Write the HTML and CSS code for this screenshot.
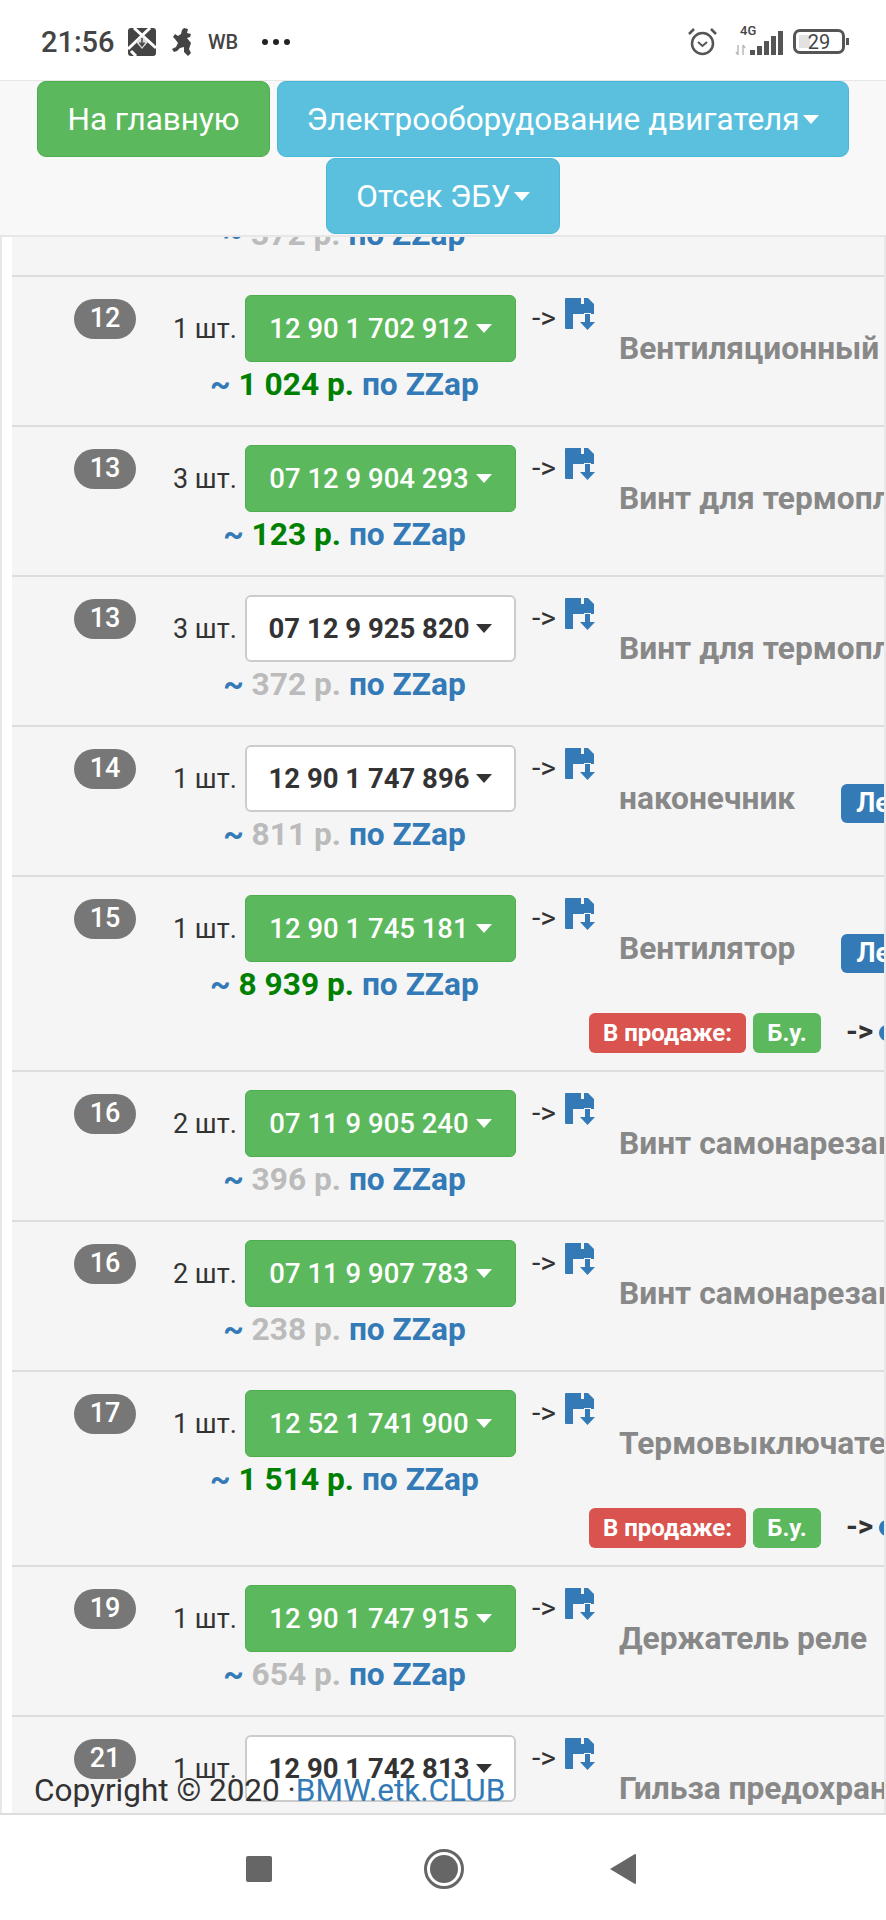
FILE: index.html
```html
<!DOCTYPE html>
<html lang="ru">
<head>
    <meta charset="UTF-8">
    <meta name="viewport" content="width=device-width, initial-scale=1.0">
    <title>Отсек ЭБУ - BMW.etk.CLUB</title>
    <link rel="stylesheet" href="styles.css">
</head>
<body>
    <svg class="defs" width="0" height="0">
        <symbol id="disk" viewBox="0 0 31 32">
            <path d="M1 0H16V6H19V0H23L29 6V16H26V15H19V16H8V31H1Q0 31 0 30V1Q0 0 1 0Z"/>
            <path d="M20 16H25V24H30L22.500 32L15 24H20Z"/>
        </symbol>
    </svg>

    <div class="status-bar">
        <div class="status-left">
            <span class="clock">21:56</span>
            <svg class="st-icon" width="28" height="28" viewBox="0 0 28 28">
                <rect width="28" height="28" rx="3" fill="#444"/>
                <path d="M6 0L28 20M0 21L22 0M3 23L8 28" stroke="#fff" stroke-width="3" fill="none"/>
                <path d="M14 8L20 14L14 21L8 14Z" fill="#ddd"/>
                <path d="M14 10V17M11.500 14.500L14 18L16.500 14.500" stroke="#444" stroke-width="1.500" fill="none"/>
            </svg>
            <svg class="st-icon" width="20" height="28" viewBox="0 0 20 28">
                <path d="M12 0L16 1L15 5L19 6L18 9L15 10L19 15L17 21L19 25L16 28L12 24L12 19L8 20L5 23L2 24L0 21L4 19L6 15L3 11L1 9L3 6L6 8L9 6L10 2Z" fill="#444"/>
            </svg>
            <span class="wb">WB</span>
            <span class="dots"><i></i><i></i><i></i></span>
        </div>
        <div class="status-right">
            <svg width="29" height="29" viewBox="0 0 29 29" fill="none" stroke="#555" stroke-width="2.500">
                <circle cx="14.500" cy="16.500" r="10.500"/>
                <path d="M10 15L14.500 19L19 15" stroke-width="2"/>
                <path d="M1 7L6 2M28 7L23 2" stroke-width="2.500"/>
            </svg>
            <div class="signal">
                <span class="net">4G</span>
                <svg width="48" height="24" viewBox="0 0 48 24">
                    <path d="M3 14V24M1 21L3 24M8 24V14M10 17L8 14" stroke="#bbb" stroke-width="1.500" fill="none"/>
                    <rect x="15" y="19" width="5" height="5" fill="#555"/>
                    <rect x="22" y="15" width="5" height="9" fill="#555"/>
                    <rect x="29" y="10" width="5" height="14" fill="#555"/>
                    <rect x="36" y="5" width="5" height="19" fill="#555"/>
                    <rect x="43" y="0" width="5" height="24" fill="#555"/>
                </svg>
            </div>
            <div class="battery"><span class="level"></span><span class="pct">29</span></div>
        </div>
    </div>

    <div class="page">
        <div class="navbar">
            <a class="nav-btn green">На главную</a>
            <a class="nav-btn blue">Электрооборудование двигателя<b class="caret"></b></a>
            <a class="nav-btn blue">Отсек ЭБУ<b class="caret"></b></a>
        </div>

        <div class="parts">
            <div class="row tail">
                <div class="price"><span class="tilde">~</span> <span class="gray">372 р.</span> <a>по ZZap</a></div>
            </div>

            <div class="row">
                <span class="num">12</span>
                <div class="part">
                    <div class="line"><span class="qty">1 шт.</span><a class="part-btn">12 90 1 702 912<b class="caret"></b></a></div>
                    <div class="price"><span class="tilde">~</span> <span class="ok">1 024 р.</span> <a>по ZZap</a></div>
                </div>
                <div class="go">-&gt;<svg class="disk"><use href="#disk"/></svg></div>
                <div class="name">Вентиляционный</div>
            </div>

            <div class="row">
                <span class="num">13</span>
                <div class="part">
                    <div class="line"><span class="qty">3 шт.</span><a class="part-btn">07 12 9 904 293<b class="caret"></b></a></div>
                    <div class="price"><span class="tilde">~</span> <span class="ok">123 р.</span> <a>по ZZap</a></div>
                </div>
                <div class="go">-&gt;<svg class="disk"><use href="#disk"/></svg></div>
                <div class="name">Винт для термопластов</div>
            </div>

            <div class="row">
                <span class="num">13</span>
                <div class="part">
                    <div class="line"><span class="qty">3 шт.</span><a class="part-btn plain">07 12 9 925 820<b class="caret"></b></a></div>
                    <div class="price"><span class="tilde">~</span> <span class="gray">372 р.</span> <a>по ZZap</a></div>
                </div>
                <div class="go">-&gt;<svg class="disk"><use href="#disk"/></svg></div>
                <div class="name">Винт для термопластов</div>
            </div>

            <div class="row">
                <span class="num">14</span>
                <div class="part">
                    <div class="line"><span class="qty">1 шт.</span><a class="part-btn plain">12 90 1 747 896<b class="caret"></b></a></div>
                    <div class="price"><span class="tilde">~</span> <span class="gray">811 р.</span> <a>по ZZap</a></div>
                </div>
                <div class="go">-&gt;<svg class="disk"><use href="#disk"/></svg></div>
                <div class="name">наконечник<span class="tag">Левый</span></div>
            </div>

            <div class="row sale">
                <span class="num">15</span>
                <div class="part">
                    <div class="line"><span class="qty">1 шт.</span><a class="part-btn">12 90 1 745 181<b class="caret"></b></a></div>
                    <div class="price"><span class="tilde">~</span> <span class="ok">8 939 р.</span> <a>по ZZap</a></div>
                </div>
                <div class="go">-&gt;<svg class="disk"><use href="#disk"/></svg></div>
                <div class="name">Вентилятор<span class="tag">Левый</span></div>
                <div class="offer"><span class="lbl red">В продаже:</span><span class="lbl grn">Б.у.</span><span class="to">-&gt;</span><span class="to-dot"></span></div>
            </div>

            <div class="row">
                <span class="num">16</span>
                <div class="part">
                    <div class="line"><span class="qty">2 шт.</span><a class="part-btn">07 11 9 905 240<b class="caret"></b></a></div>
                    <div class="price"><span class="tilde">~</span> <span class="gray">396 р.</span> <a>по ZZap</a></div>
                </div>
                <div class="go">-&gt;<svg class="disk"><use href="#disk"/></svg></div>
                <div class="name">Винт самонарезающий</div>
            </div>

            <div class="row">
                <span class="num">16</span>
                <div class="part">
                    <div class="line"><span class="qty">2 шт.</span><a class="part-btn">07 11 9 907 783<b class="caret"></b></a></div>
                    <div class="price"><span class="tilde">~</span> <span class="gray">238 р.</span> <a>по ZZap</a></div>
                </div>
                <div class="go">-&gt;<svg class="disk"><use href="#disk"/></svg></div>
                <div class="name">Винт самонарезающий</div>
            </div>

            <div class="row sale">
                <span class="num">17</span>
                <div class="part">
                    <div class="line"><span class="qty">1 шт.</span><a class="part-btn">12 52 1 741 900<b class="caret"></b></a></div>
                    <div class="price"><span class="tilde">~</span> <span class="ok">1 514 р.</span> <a>по ZZap</a></div>
                </div>
                <div class="go">-&gt;<svg class="disk"><use href="#disk"/></svg></div>
                <div class="name">Термовыключатель</div>
                <div class="offer"><span class="lbl red">В продаже:</span><span class="lbl grn">Б.у.</span><span class="to">-&gt;</span><span class="to-dot"></span></div>
            </div>

            <div class="row">
                <span class="num">19</span>
                <div class="part">
                    <div class="line"><span class="qty">1 шт.</span><a class="part-btn">12 90 1 747 915<b class="caret"></b></a></div>
                    <div class="price"><span class="tilde">~</span> <span class="gray">654 р.</span> <a>по ZZap</a></div>
                </div>
                <div class="go">-&gt;<svg class="disk"><use href="#disk"/></svg></div>
                <div class="name">Держатель реле</div>
            </div>

            <div class="row">
                <span class="num">21</span>
                <div class="part">
                    <div class="line"><span class="qty">1 шт.</span><a class="part-btn plain">12 90 1 742 813<b class="caret"></b></a></div>
                    <div class="price"><span class="tilde">~</span> <span class="gray">477 р.</span> <a>по ZZap</a></div>
                </div>
                <div class="go">-&gt;<svg class="disk"><use href="#disk"/></svg></div>
                <div class="name">Гильза предохранителя</div>
            </div>
        </div>

        <div class="copyright">Copyright © 2020 ·<a>BMW.etk.CLUB</a></div>
    </div>

    <div class="android-nav">
        <span class="nav-square"></span>
        <span class="nav-circle"><i></i></span>
        <svg width="26" height="30" viewBox="0 0 26 30"><path d="M25 0Q26 0 26 1V29Q26 30 25 30L0 15Z" fill="#666"/></svg>
    </div>
</body>
</html>
```

FILE: styles.css
```css
* {
    box-sizing: border-box;
}
html, body {
    margin: 0;
    padding: 0;
}
body {
    width: 886px;
    height: 1920px;
    overflow: hidden;
    background: #fff;
    font-family: Roboto, "Noto Sans", sans-serif;
    color: #333;
    display: flex;
    flex-direction: column;
}
.defs {
    position: absolute;
}

/* phone status bar */
.status-bar {
    height: 80px;
    flex: none;
    background: #fff;
    display: flex;
    justify-content: space-between;
    align-items: center;
    padding: 3px 41px 0 41px;
}
.status-left, .status-right {
    display: flex;
    align-items: center;
}
.clock {
    font-size: 29px;
    font-weight: 500;
    color: #444;
    width: 87px;
}
.st-icon {
    margin-right: 16px;
}
.wb {
    font-size: 20px;
    font-weight: 500;
    color: #444;
    width: 54px;
}
.dots {
    display: flex;
    gap: 5px;
}
.dots i {
    width: 6px;
    height: 6px;
    border-radius: 50%;
    background: #222;
}
.signal {
    width: 48px;
    height: 24px;
    margin: 3px 10px 0 18px;
    position: relative;
}
.signal svg {
    display: block;
}
.net {
    position: absolute;
    left: 5px;
    top: -8px;
    font-size: 13px;
    font-weight: 500;
    color: #444;
}
.battery {
    width: 52px;
    height: 25px;
    border: 3px solid #555;
    border-radius: 7px;
    position: relative;
    display: flex;
    justify-content: center;
    align-items: center;
}
.battery:after {
    content: "";
    position: absolute;
    right: -7px;
    top: 6px;
    width: 3px;
    height: 7px;
    background: #555;
}
.level {
    position: absolute;
    left: 3px;
    top: 3px;
    bottom: 3px;
    width: 11px;
    background: #e2e2e2;
}
.pct {
    position: relative;
    font-size: 20px;
    color: #444;
}

/* page under the status bar */
.page {
    flex: 1;
    position: relative;
    overflow: hidden;
    border-bottom: 2px solid #ddd;
}
.navbar {
    position: absolute;
    left: 0;
    top: 0;
    width: 886px;
    height: 157px;
    z-index: 2;
    background: #f8f8f8;
    border-top: 1px solid #e7e7e7;
    border-bottom: 2px solid #e7e7e7;
    display: flex;
    flex-wrap: wrap;
    justify-content: center;
    align-content: flex-start;
    column-gap: 7px;
}
.nav-btn {
    height: 76px;
    margin-bottom: 1px;
    padding: 0 29px;
    border-radius: 9px;
    font-size: 31.500px;
    color: #fff;
    display: flex;
    align-items: center;
    white-space: nowrap;
}
.green {
    background: #5cb85c;
    border: 1px solid #4cae4c;
}
.blue {
    background: #5bc0de;
    border: 1px solid #46b8da;
}
.caret {
    width: 0;
    height: 0;
    margin-left: 3px;
    border-top: 9px solid;
    border-left: 8px solid transparent;
    border-right: 8px solid transparent;
    display: inline-block;
}

.parts {
    width: 886px;
    padding-left: 10px;
    border-left: 2px solid #e8e8e8;
    border-right: 2px solid #e8e8e8;
    background: #fff;
}
.row {
    height: 150px;
    background: #f5f5f5;
    border-bottom: 2px solid #ddd;
    display: flex;
    align-items: flex-start;
    align-content: flex-start;
    flex-wrap: wrap;
    overflow: hidden;
}
.row.tail {
    height: 197px;
    padding: 132px 0 0 161px;
}
.row.tail .price {
    width: 342px;
    text-align: center;
}
.row.sale {
    height: 195px;
}
.num {
    width: 62px;
    height: 40px;
    margin: 22px 0 0 62px;
    border-radius: 20px;
    background: #777;
    color: #fff;
    font-size: 27px;
    font-weight: 500;
    text-align: center;
    line-height: 38px;
}
.part {
    width: 343px;
    margin: 18px 0 0 37px;
    text-align: center;
}
.line {
    display: flex;
    align-items: center;
    justify-content: space-between;
}
.qty {
    font-size: 27px;
    color: #333;
}
.part-btn {
    width: 271px;
    height: 67px;
    border-radius: 6px;
    background: #5cb85c;
    border: 1px solid #4cae4c;
    color: #fff;
    font-size: 27.500px;
    font-weight: 500;
    display: flex;
    align-items: center;
    justify-content: center;
}
.part-btn .caret {
    margin-left: 7px;
}
.part-btn.plain {
    background: #fff;
    border: 2px solid #ccc;
    color: #333;
    font-weight: 700;
}
.price {
    font-size: 31.700px;
    font-weight: 700;
    line-height: 34px;
    margin-top: 6px;
    color: #337ab7;
    white-space: nowrap;
}
.price a {
    color: #337ab7;
}
.ok {
    color: green;
}
.gray {
    color: #bbb;
}
.go {
    width: 87px;
    margin: 21px 0 0 16px;
    padding-left: 0;
    font-size: 30px;
    line-height: 40px;
    color: #333;
    display: flex;
    gap: 9px;
    height: 32px;
    align-items: flex-start;
}
.disk {
    width: 31px;
    height: 32px;
    flex: none;
    fill: #337ab7;
}
.name {
    flex: 1;
    min-width: 0;
    margin-top: 53px;
    font-size: 31.700px;
    font-weight: 700;
    line-height: 38px;
    color: #888;
    white-space: nowrap;
    display: flex;
    align-items: flex-start;
}
.tag {
    flex: none;
    margin: 4px 0 0 46px;
    padding: 0 15px;
    background: #337ab7;
    color: #fff;
    font-size: 27px;
    line-height: 39px;
    border-radius: 6px;
}
.offer {
    width: 100%;
    display: flex;
    align-items: center;
    padding-left: 577px;
    margin-top: 11px;
}
.lbl {
    flex: none;
    height: 40px;
    border-radius: 6px;
    color: #fff;
    font-size: 24px;
    font-weight: 700;
    display: flex;
    align-items: center;
    justify-content: center;
}
.red {
    width: 157px;
    background: #d9534f;
}
.grn {
    width: 68px;
    margin-left: 7px;
    background: #5cb85c;
}
.to {
    flex: none;
    margin: -6px 0 0 25px;
    font-size: 30px;
    font-weight: 700;
    color: #333;
    white-space: nowrap;
}
.to-dot {
    flex: none;
    width: 8px;
    height: 16px;
    margin-left: 6px;
    background: #337ab7;
    border-radius: 8px 0 0 8px;
}
.copyright {
    position: absolute;
    left: 34px;
    top: 1692px;
    z-index: 3;
    font-size: 31.500px;
    color: #333;
    white-space: nowrap;
}
.copyright a {
    color: #337ab7;
}

/* android buttons */
.android-nav {
    height: 105px;
    flex: none;
    background: #fff;
    display: flex;
    align-items: center;
    padding: 3px 250px 0 246px;
    justify-content: space-between;
}
.nav-square {
    width: 26px;
    height: 26px;
    border-radius: 2px;
    background: #666;
}
.nav-circle {
    width: 40px;
    height: 40px;
    margin-left: 5px;
    border: 3px solid #666;
    border-radius: 50%;
    display: flex;
    align-items: center;
    justify-content: center;
}
.nav-circle i {
    width: 28px;
    height: 28px;
    border-radius: 50%;
    background: #666;
}
```
